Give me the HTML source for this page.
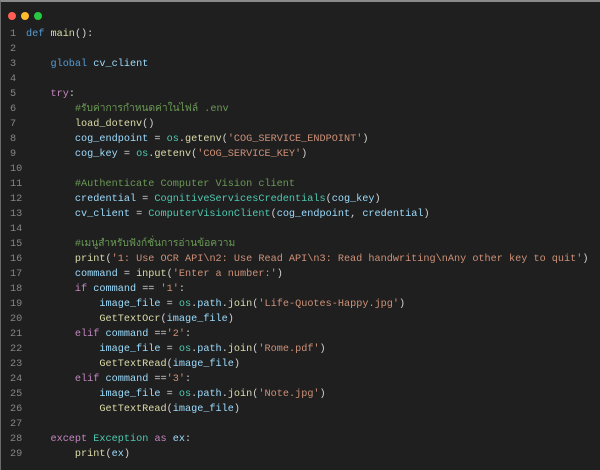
<!DOCTYPE html><html><head><meta charset="utf-8"><style>
body{margin:0;width:600px;height:470px;background:#1f1f1f;overflow:hidden;border-top:2px solid #8a8a8a;box-sizing:border-box;border-left:1px solid #6a6a6a}
.d{position:absolute;top:12px;width:8px;height:8px;border-radius:50%}
pre{position:absolute;left:0;top:27px;margin:0;font-family:"Liberation Mono","Noto Sans CJK SC",monospace;font-size:10.2px;line-height:15px;color:#d4d4d4}
.n{color:#858585;display:inline-block;width:26px;text-align:left;padding-left:10px;box-sizing:border-box}
.k{color:#569cd6}.c{color:#c586c0}.s{color:#ce9178}.f{color:#dcdcaa}.v{color:#9cdcfe}.g{color:#6a9955}.t{color:#4ec9b0}
</style></head><body>
<div class="d" style="left:8px;background:#ff5f57"></div><div class="d" style="left:21px;background:#febc2e"></div><div class="d" style="left:34px;background:#28c840"></div>
<pre><span class="n">1</span><span class="k">def</span> <span class="f">main</span>():
<span class="n">2</span>
<span class="n">3</span>    <span class="k">global</span> <span class="v">cv_client</span>
<span class="n">4</span>
<span class="n">5</span>    <span class="c">try</span>:
<span class="n">6</span>        <span class="g">#รับค่าการกำหนดค่าในไฟล์ .env</span>
<span class="n">7</span>        <span class="f">load_dotenv</span>()
<span class="n">8</span>        <span class="v">cog_endpoint</span> = <span class="t">os</span>.<span class="f">getenv</span>(<span class="s">'COG_SERVICE_ENDPOINT'</span>)
<span class="n">9</span>        <span class="v">cog_key</span> = <span class="t">os</span>.<span class="f">getenv</span>(<span class="s">'COG_SERVICE_KEY'</span>)
<span class="n">10</span>
<span class="n">11</span>        <span class="g">#Authenticate Computer Vision client</span>
<span class="n">12</span>        <span class="v">credential</span> = <span class="t">CognitiveServicesCredentials</span>(<span class="v">cog_key</span>)
<span class="n">13</span>        <span class="v">cv_client</span> = <span class="t">ComputerVisionClient</span>(<span class="v">cog_endpoint</span>, <span class="v">credential</span>)
<span class="n">14</span>
<span class="n">15</span>        <span class="g">#เมนูสำหรับฟังก์ชั่นการอ่านข้อความ</span>
<span class="n">16</span>        <span class="f">print</span>(<span class="s">'1: Use OCR API\n2: Use Read API\n3: Read handwriting\nAny other key to quit'</span>)
<span class="n">17</span>        <span class="v">command</span> = <span class="f">input</span>(<span class="s">'Enter a number:'</span>)
<span class="n">18</span>        <span class="c">if</span> <span class="v">command</span> == <span class="s">'1'</span>:
<span class="n">19</span>            <span class="v">image_file</span> = <span class="t">os</span>.<span class="v">path</span>.<span class="f">join</span>(<span class="s">'Life-Quotes-Happy.jpg'</span>)
<span class="n">20</span>            <span class="f">GetTextOcr</span>(<span class="v">image_file</span>)
<span class="n">21</span>        <span class="c">elif</span> <span class="v">command</span> ==<span class="s">'2'</span>:
<span class="n">22</span>            <span class="v">image_file</span> = <span class="t">os</span>.<span class="v">path</span>.<span class="f">join</span>(<span class="s">'Rome.pdf'</span>)
<span class="n">23</span>            <span class="f">GetTextRead</span>(<span class="v">image_file</span>)
<span class="n">24</span>        <span class="c">elif</span> <span class="v">command</span> ==<span class="s">'3'</span>:
<span class="n">25</span>            <span class="v">image_file</span> = <span class="t">os</span>.<span class="v">path</span>.<span class="f">join</span>(<span class="s">'Note.jpg'</span>)
<span class="n">26</span>            <span class="f">GetTextRead</span>(<span class="v">image_file</span>)
<span class="n">27</span>
<span class="n">28</span>    <span class="c">except</span> <span class="t">Exception</span> <span class="c">as</span> <span class="v">ex</span>:
<span class="n">29</span>        <span class="f">print</span>(<span class="v">ex</span>)</pre>
</body></html>
